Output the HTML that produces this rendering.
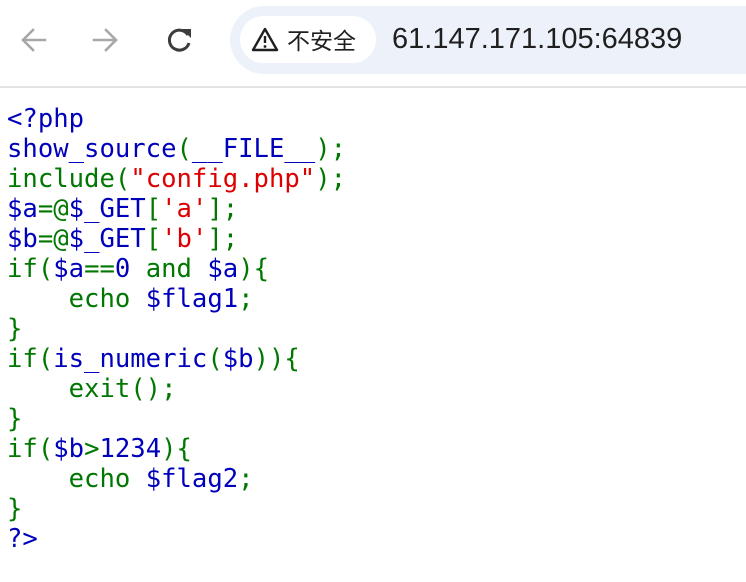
<!DOCTYPE html>
<html><head><meta charset="utf-8"><style>
body{margin:0;width:746px;height:582px;background:#fff;overflow:hidden;position:relative}
.bar{position:absolute;left:230px;top:6px;width:560px;height:68px;background:#edf2fa;border-radius:34px}
.chip{position:absolute;left:240px;top:16px;width:136px;height:47px;background:#fff;border-radius:24px}
.chip span{position:absolute;left:47px;top:9px;font:23px "Noto Sans CJK SC",sans-serif;line-height:28px;color:#1f1f1f}
.url{position:absolute;left:392px;top:21px;font:29px "Liberation Sans",sans-serif;color:#1f1f1f;line-height:36px}
.line{position:absolute;left:0;top:86px;width:746px;height:2px;background:#e3e3e3}
pre{position:absolute;left:7px;top:104px;margin:0;font:25.6px/30px "DejaVu Sans Mono",monospace;color:#0000BB}
.g{color:#007700}.r{color:#DD0000}
</style></head><body>
<svg style="position:absolute;left:0;top:0" width="230" height="86">
<g stroke="#a8a8a8" stroke-width="2.6" fill="none" stroke-linecap="square">
<path d="M45 40H24M33 30l-10 10 10 10"/>
<path d="M94 40h21M106 30l10 10-10 10"/>
</g>
<path d="M188 35a10 10 0 1 0 1 8" stroke="#3c3c3c" stroke-width="3" fill="none"/>
<path d="M182 29h9v9z" fill="#3c3c3c"/>
</svg>
<div class="bar"></div>
<div class="chip"><svg style="position:absolute;left:11px;top:11px" width="28" height="26"><path d="M14 2L26 23H2Z" fill="none" stroke="#1f1f1f" stroke-width="2.4" stroke-linejoin="round"/><path d="M14 9v7" stroke="#1f1f1f" stroke-width="2.4"/><circle cx="14" cy="19.5" r="1.4" fill="#1f1f1f"/></svg><span>不安全</span></div>
<div class="url">61.147.171.105:64839</div>
<div class="line"></div>
<pre>&lt;?php
show_source<span class="g">(</span>__FILE__<span class="g">);
include(</span><span class="r">"config.php"</span><span class="g">);
</span>$a<span class="g">=@</span>$_GET<span class="g">[</span><span class="r">'a'</span><span class="g">];
</span>$b<span class="g">=@</span>$_GET<span class="g">[</span><span class="r">'b'</span><span class="g">];
if(</span>$a<span class="g">==</span>0 <span class="g">and </span>$a<span class="g">){
    echo </span>$flag1<span class="g">;
}
if(</span>is_numeric<span class="g">(</span>$b<span class="g">)){
    exit();
}
if(</span>$b<span class="g">&gt;</span>1234<span class="g">){
    echo </span>$flag2<span class="g">;
}
</span>?&gt;</pre>
</body></html>
